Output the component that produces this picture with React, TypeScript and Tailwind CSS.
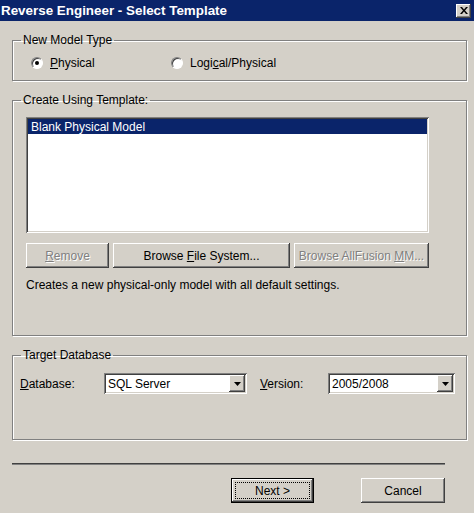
import React from "react";

const font = "font-['Liberation_Sans',Arial,sans-serif]";
const raised =
  "shadow-[inset_-1px_-1px_0_#404040,inset_1px_1px_0_#ffffff,inset_-2px_-2px_0_#808080,inset_2px_2px_0_#d4d0c8]";
const sunken =
  "shadow-[inset_1px_1px_0_#808080,inset_-1px_-1px_0_#ffffff,inset_2px_2px_0_#404040,inset_-2px_-2px_0_#d4d0c8]";
const etched = "border border-[#808080] shadow-[inset_1px_1px_0_#ffffff,1px_1px_0_#ffffff]";

function Radio({ checked, label }: { checked?: boolean; label: React.ReactNode }) {
  return (
    <div className="flex items-center gap-[7px] h-[16px]">
      <span className="relative w-[12px] h-[12px] rounded-full bg-white border border-t-[#808080] border-l-[#808080] border-r-white border-b-white shadow-[inset_1px_1px_0_#404040] flex items-center justify-center">
        {checked && <span className="w-[4px] h-[4px] rounded-full bg-black" />}
      </span>
      <span>{label}</span>
    </div>
  );
}

function Btn({ children, width, disabled, isDefault }: { children: React.ReactNode; width: string; disabled?: boolean; isDefault?: boolean }) {
  if (isDefault) {
    return (
      <div className={`${width} h-[25px] border border-black flex`}>
        <div className={`flex-1 ${raised} flex items-center justify-center p-[3px]`}>
          <div className="w-full h-full border border-dotted border-black flex items-center justify-center">{children}</div>
        </div>
      </div>
    );
  }
  return (
    <div
      className={`${width} h-[25px] ${raised} flex items-center justify-center ${
        disabled ? "text-[#808080] [text-shadow:1px_1px_0_#ffffff]" : "text-black"
      }`}
    >
      {children}
    </div>
  );
}

function Combo({ value, width }: { value: string; width: string }) {
  return (
    <div className={`${width} h-[21px] bg-white ${sunken} flex items-center p-[2px]`}>
      <span className="flex-1 pl-[2px] leading-none">{value}</span>
      <div className={`w-[16px] h-[17px] bg-[#d4d0c8] ${raised} flex items-center justify-center`}>
        <svg width="7" height="4" viewBox="0 0 7 4">
          <path d="M0 0h7L3.5 4z" fill="#000" />
        </svg>
      </div>
    </div>
  );
}

export default function App() {
  return (
    <div className={`w-[474px] h-[513px] bg-[#d4d0c8] text-[12px] leading-[14px] text-black ${font}`}>
      <div className="h-[21px] bg-[#0a246a] flex items-center justify-between pl-[1px] pr-[3px]">
        <span className="text-white font-bold text-[13.4px]">Reverse Engineer - Select Template</span>
        <div className={`w-[15px] h-[14px] ${raised} bg-[#d4d0c8] flex items-center justify-center`}>
          <svg width="8" height="7" viewBox="0 0 8 7">
            <path d="M0 0h2l2 2.5L6 0h2L5 3.5 8 7H6L4 4.5 2 7H0l3-3.5z" fill="#000" />
          </svg>
        </div>
      </div>

      <div className="pl-[12px] pr-[7px] flex flex-col">
        <fieldset className={`mt-[12px] ${etched}`}>
          <legend className="ml-[8px] px-[2px]">New Model Type</legend>
          <div className="pt-[8px] pb-[9px] pl-[18px] flex">
            <div className="w-[140px]">
              <Radio checked label={<><u>P</u>hysical</>} />
            </div>
            <Radio label={<>Logi<u>c</u>al/Physical</>} />
          </div>
        </fieldset>

        <fieldset className={`mt-[12px] ${etched}`}>
          <legend className="ml-[8px] px-[2px]">Create Using Template:</legend>
          <div className="pl-[13px] pb-[43px]">
            <div className={`mt-[10px] w-[403px] h-[116px] bg-white ${sunken} p-[2px]`}>
              <div className="h-[15px] bg-[#0a246a] text-white pl-[3px] flex items-center">Blank Physical Model</div>
            </div>
            <div className="mt-[10px] flex gap-[4px]">
              <Btn width="w-[83px]" disabled>
                <span><u>R</u>emove</span>
              </Btn>
              <Btn width="w-[177px]">
                <span>Browse <u>F</u>ile System...</span>
              </Btn>
              <Btn width="w-[135px]" disabled>
                <span>Browse AllFusion <u>M</u>M...</span>
              </Btn>
            </div>
            <p className="mt-[10px]">Creates a new physical-only model with all default settings.</p>
          </div>
        </fieldset>

        <fieldset className={`mt-[12px] ${etched}`}>
          <legend className="ml-[8px] px-[2px]">Target Database</legend>
          <div className="pl-[7px] pt-[11px] pb-[45px] flex items-center">
            <span className="w-[84px]"><u>D</u>atabase:</span>
            <Combo value="SQL Server" width="w-[143px]" />
            <span className="ml-[13px] w-[68px]"><u>V</u>ersion:</span>
            <Combo value="2005/2008" width="w-[127px]" />
          </div>
        </fieldset>

        <div className="mt-[23px] w-[433px] h-[2px] border-t border-t-[#404040] border-b border-b-[#808080]" />

        <div className="mt-[13px] w-[433px] flex justify-end gap-[47px]">
          <Btn width="w-[83px]" isDefault>
            <span>Next &gt;</span>
          </Btn>
          <Btn width="w-[84px]">
            <span>Cancel</span>
          </Btn>
        </div>
      </div>
    </div>
  );
}
